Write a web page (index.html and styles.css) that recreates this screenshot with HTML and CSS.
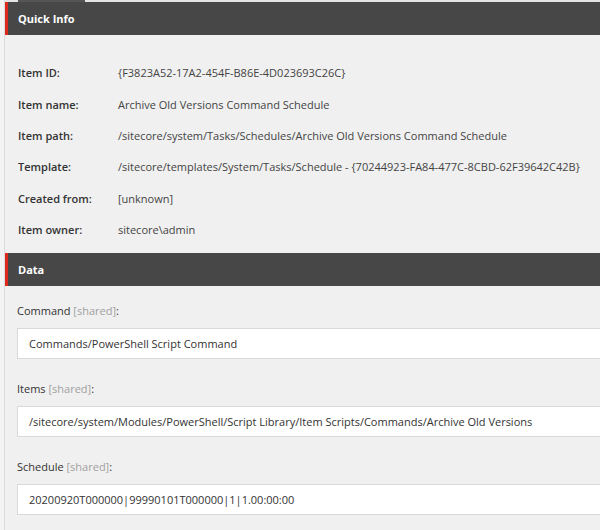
FILE: index.html
```html
<!DOCTYPE html>
<html>
<head>
<meta charset="utf-8">
<link rel="stylesheet" href="styles.css">
</head>
<body>
<div class="page">
  <div class="tabstrip"><span class="tab"></span></div>
  <div class="section-header">Quick Info</div>
  <div class="quickinfo">
    <div class="row"><span class="label">Item ID:</span><span class="value">{F3823A52-17A2-454F-B86E-4D023693C26C}</span></div>
    <div class="row"><span class="label">Item name:</span><span class="value">Archive Old Versions Command Schedule</span></div>
    <div class="row"><span class="label">Item path:</span><span class="value">/sitecore/system/Tasks/Schedules/Archive Old Versions Command Schedule</span></div>
    <div class="row"><span class="label">Template:</span><span class="value">/sitecore/templates/System/Tasks/Schedule - {70244923-FA84-477C-8CBD-62F39642C42B}</span></div>
    <div class="row"><span class="label">Created from:</span><span class="value">[unknown]</span></div>
    <div class="row"><span class="label">Item owner:</span><span class="value">sitecore\admin</span></div>
  </div>
  <div class="section-header">Data</div>
  <div class="fields">
    <div class="field">
      <div class="field-label">Command <span class="shared">[shared]</span>:</div>
      <div class="input">Commands/PowerShell Script Command</div>
    </div>
    <div class="field">
      <div class="field-label">Items <span class="shared">[shared]</span>:</div>
      <div class="input">/sitecore/system/Modules/PowerShell/Script Library/Item Scripts/Commands/Archive Old Versions</div>
    </div>
    <div class="field">
      <div class="field-label">Schedule <span class="shared">[shared]</span>:</div>
      <div class="input">20200920T000000|99990101T000000|1|1.00:00:00</div>
    </div>
  </div>
</div>
</body>
</html>
```

FILE: styles.css
```css
html, body {
  margin: 0;
  padding: 0;
  background: #f3f3f3;
}
body {
  font-family: "Open Sans", "Liberation Sans", sans-serif;
  font-size: 11px;
  color: #333;
  width: 600px;
  height: 530px;
  overflow: hidden;
}
.page {
  margin-left: 4px;
  border-left: 1px solid #dcdcdc;
  background: #f0f0f0;
  width: 596px;
  min-height: 530px;
  overflow: hidden;
}
.tabstrip {
  height: 2px;
  display: flex;
  background: #e4e4e4;
  margin-left: -5px;
}
.tab {
  margin-left: 18px;
  width: 67px;
  background: #555;
}
.section-header {
  height: 33px;
  display: flex;
  align-items: center;
  background: #474747;
  border-left: 4px solid #dc291e;
  margin-left: -1px;
  padding-left: 10px;
  color: #fff;
  font-weight: 700;
  font-size: 11px;
}
.quickinfo {
  padding: 22px 0 8px 13px;
}
.row {
  display: flex;
  align-items: center;
  height: 31.4px;
}
.label {
  width: 100px;
  font-weight: 600;
  color: #333;
}
.value {
  color: #444;
  white-space: nowrap;
}
.fields {
  padding: 16px 0 0 12px;
}
.field {
  margin-bottom: 21px;
}
.field-label {
  line-height: 17px;
  height: 17px;
  margin-bottom: 9px;
  color: #333;
}
.shared {
  color: #a0a0a0;
}
.input {
  height: 29px;
  line-height: 29px;
  border: 1px solid #d9d9d9;
  border-right: none;
  background: #fff;
  padding-left: 11px;
  white-space: nowrap;
  color: #333;
}
```
